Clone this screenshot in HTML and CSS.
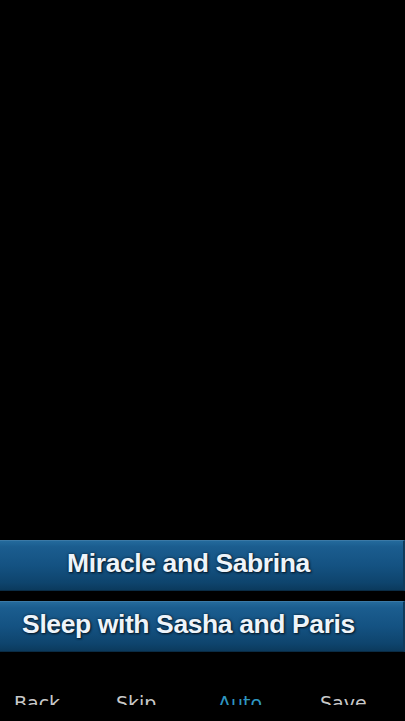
FILE: index.html
```html
<!DOCTYPE html>
<html>
<head>
<meta charset="utf-8">
<link rel="stylesheet" href="styles.css">
</head>
<body>
<div class="screen">
  <div class="stage"></div>
  <div class="choices">
    <div class="choice"><span>Miracle and Sabrina</span></div>
    <div class="choice"><span>Sleep with Sasha and Paris</span></div>
  </div>
  <div class="menu">
    <span class="item">Back</span>
    <span class="item">Skip</span>
    <span class="item active">Auto</span>
    <span class="item">Save</span>
  </div>
</div>
</body>
</html>
```
FILE: styles.css
```css
html, body {
  margin: 0;
  padding: 0;
  background: #000;
  height: 100%;
  overflow: hidden;
}
.screen {
  width: 405px;
  height: 721px;
  display: flex;
  flex-direction: column;
  background: #000;
}
.stage {
  height: 540px;
  flex: none;
}
.choices {
  display: flex;
  flex-direction: column;
  gap: 10px;
}
.choice {
  height: 51px;
  box-sizing: border-box;
  display: flex;
  align-items: center;
  justify-content: center;
  padding-right: 26px;
  padding-bottom: 4px;
  background: linear-gradient(to bottom, #246a9c 0%, #1b5d8f 12%, #145282 50%, #0e446d 85%, #0b3a5d 100%);
  border-top: 1px solid #3b79a6;
  border-bottom: 1px solid #0a2c45;
  border-right: 2px solid #0f3b5c;
}
.choice span {
  font-family: "Liberation Sans", Arial, sans-serif;
  font-weight: bold;
  font-size: 26.5px;
  letter-spacing: -0.4px;
  color: #eef4fa;
  text-shadow: 1px 1px 2px #05192a, 0 0 3px rgba(0,0,0,0.6);
  white-space: nowrap;
}
.menu {
  height: 13px;
  margin-top: 40px;
  overflow: hidden;
  display: flex;
  padding-left: 14px;
}
.item {
  font-family: "DejaVu Sans", sans-serif;
  font-size: 19px;
  line-height: 22px;
  color: #c8c8c8;
  width: 102px;
  flex: none;
  display: block;
}
.item.active {
  color: #2f97c2;
}
```
